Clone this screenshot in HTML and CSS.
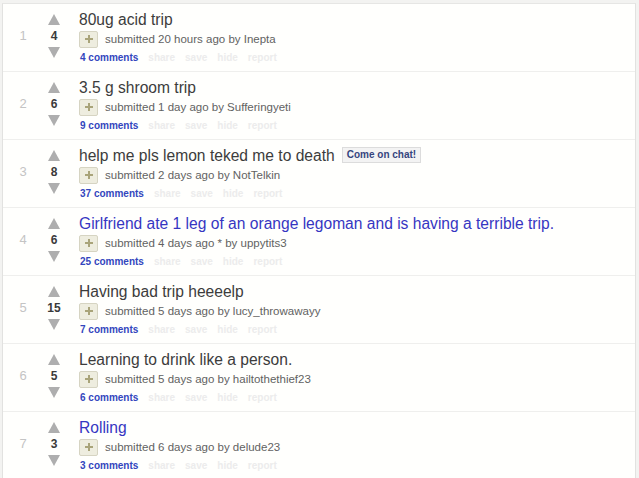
FILE: index.html
```html
<!DOCTYPE html>
<html>
<head>
<meta charset="utf-8">
<link rel="stylesheet" href="styles.css">
</head>
<body>
<div class="frame">
  <div class="row">
    <div class="rank">1</div>
    <div class="vote">
      <svg class="arrow" viewBox="0 0 12 11"><polygon points="6,0 12,11 0,11"/></svg>
      <div class="score">4</div>
      <svg class="arrow" viewBox="0 0 12 11"><polygon points="0,0 12,0 6,11"/></svg>
    </div>
    <div class="entry">
      <div class="title-line"><a class="title">80ug acid trip</a></div>
      <div class="tagline"><span class="expando"><svg viewBox="0 0 8 8"><rect x="3" y="0" width="2" height="8"/><rect x="0" y="3" width="8" height="2"/></svg></span>submitted 20 hours ago by Inepta</div>
      <div class="buttons"><a class="comments">4 comments</a><span>share</span><span>save</span><span>hide</span><span>report</span></div>
    </div>
  </div>
  <div class="row">
    <div class="rank">2</div>
    <div class="vote">
      <svg class="arrow" viewBox="0 0 12 11"><polygon points="6,0 12,11 0,11"/></svg>
      <div class="score">6</div>
      <svg class="arrow" viewBox="0 0 12 11"><polygon points="0,0 12,0 6,11"/></svg>
    </div>
    <div class="entry">
      <div class="title-line"><a class="title">3.5 g shroom trip</a></div>
      <div class="tagline"><span class="expando"><svg viewBox="0 0 8 8"><rect x="3" y="0" width="2" height="8"/><rect x="0" y="3" width="8" height="2"/></svg></span>submitted 1 day ago by Sufferingyeti</div>
      <div class="buttons"><a class="comments">9 comments</a><span>share</span><span>save</span><span>hide</span><span>report</span></div>
    </div>
  </div>
  <div class="row">
    <div class="rank">3</div>
    <div class="vote">
      <svg class="arrow" viewBox="0 0 12 11"><polygon points="6,0 12,11 0,11"/></svg>
      <div class="score">8</div>
      <svg class="arrow" viewBox="0 0 12 11"><polygon points="0,0 12,0 6,11"/></svg>
    </div>
    <div class="entry">
      <div class="title-line"><a class="title">help me pls lemon teked me to death</a><span class="flair">Come on chat!</span></div>
      <div class="tagline"><span class="expando"><svg viewBox="0 0 8 8"><rect x="3" y="0" width="2" height="8"/><rect x="0" y="3" width="8" height="2"/></svg></span>submitted 2 days ago by NotTelkin</div>
      <div class="buttons"><a class="comments">37 comments</a><span>share</span><span>save</span><span>hide</span><span>report</span></div>
    </div>
  </div>
  <div class="row">
    <div class="rank">4</div>
    <div class="vote">
      <svg class="arrow" viewBox="0 0 12 11"><polygon points="6,0 12,11 0,11"/></svg>
      <div class="score">6</div>
      <svg class="arrow" viewBox="0 0 12 11"><polygon points="0,0 12,0 6,11"/></svg>
    </div>
    <div class="entry">
      <div class="title-line"><a class="title unvisited">Girlfriend ate 1 leg of an orange legoman and is having a terrible trip.</a></div>
      <div class="tagline"><span class="expando"><svg viewBox="0 0 8 8"><rect x="3" y="0" width="2" height="8"/><rect x="0" y="3" width="8" height="2"/></svg></span>submitted 4 days ago * by uppytits3</div>
      <div class="buttons"><a class="comments">25 comments</a><span>share</span><span>save</span><span>hide</span><span>report</span></div>
    </div>
  </div>
  <div class="row">
    <div class="rank">5</div>
    <div class="vote">
      <svg class="arrow" viewBox="0 0 12 11"><polygon points="6,0 12,11 0,11"/></svg>
      <div class="score">15</div>
      <svg class="arrow" viewBox="0 0 12 11"><polygon points="0,0 12,0 6,11"/></svg>
    </div>
    <div class="entry">
      <div class="title-line"><a class="title">Having bad trip heeeelp</a></div>
      <div class="tagline"><span class="expando"><svg viewBox="0 0 8 8"><rect x="3" y="0" width="2" height="8"/><rect x="0" y="3" width="8" height="2"/></svg></span>submitted 5 days ago by lucy_throwawayy</div>
      <div class="buttons"><a class="comments">7 comments</a><span>share</span><span>save</span><span>hide</span><span>report</span></div>
    </div>
  </div>
  <div class="row">
    <div class="rank">6</div>
    <div class="vote">
      <svg class="arrow" viewBox="0 0 12 11"><polygon points="6,0 12,11 0,11"/></svg>
      <div class="score">5</div>
      <svg class="arrow" viewBox="0 0 12 11"><polygon points="0,0 12,0 6,11"/></svg>
    </div>
    <div class="entry">
      <div class="title-line"><a class="title">Learning to drink like a person.</a></div>
      <div class="tagline"><span class="expando"><svg viewBox="0 0 8 8"><rect x="3" y="0" width="2" height="8"/><rect x="0" y="3" width="8" height="2"/></svg></span>submitted 5 days ago by hailtothethief23</div>
      <div class="buttons"><a class="comments">6 comments</a><span>share</span><span>save</span><span>hide</span><span>report</span></div>
    </div>
  </div>
  <div class="row">
    <div class="rank">7</div>
    <div class="vote">
      <svg class="arrow" viewBox="0 0 12 11"><polygon points="6,0 12,11 0,11"/></svg>
      <div class="score">3</div>
      <svg class="arrow" viewBox="0 0 12 11"><polygon points="0,0 12,0 6,11"/></svg>
    </div>
    <div class="entry">
      <div class="title-line"><a class="title unvisited">Rolling</a></div>
      <div class="tagline"><span class="expando"><svg viewBox="0 0 8 8"><rect x="3" y="0" width="2" height="8"/><rect x="0" y="3" width="8" height="2"/></svg></span>submitted 6 days ago by delude23</div>
      <div class="buttons"><a class="comments">3 comments</a><span>share</span><span>save</span><span>hide</span><span>report</span></div>
    </div>
  </div>
</div>
</body>
</html>
```
FILE: styles.css
```css
html, body {
  margin: 0;
  padding: 0;
  height: 100%;
}
body {
  background: #f3f3f1;
  font-family: "Liberation Sans", Arial, sans-serif;
  overflow: hidden;
}
.frame {
  margin: 3px 0 0 2px;
  width: 632px;
  min-height: 480px;
  background: #fffffd;
  border-left: 1px solid #e2e2e0;
  border-top: 1px solid #e6e6e4;
  border-right: 1px solid #e2e2e0;
}
.row {
  display: flex;
  height: 67px;
  border-bottom: 1px solid #efefed;
}
.rank {
  width: 40px;
  padding-top: 22px;
  line-height: 20px;
  text-align: center;
  font-size: 13px;
  color: #c4c4c4;
}
.vote {
  width: 22px;
  padding-top: 10px;
  display: flex;
  flex-direction: column;
  align-items: center;
}
.arrow {
  width: 12px;
  height: 11px;
  display: block;
  fill: #aeaeae;
}
.score {
  height: 22px;
  line-height: 22px;
  font-size: 12px;
  font-weight: bold;
  color: #3a3a3a;
  text-align: center;
}
.entry {
  margin-left: 14px;
  padding-top: 6px;
}
.title-line {
  line-height: 20px;
  height: 20px;
  white-space: nowrap;
}
.title {
  font-size: 15.6px;
  color: #3c3c3c;
}
.title.unvisited {
  color: #3636c2;
}
.flair {
  display: inline-block;
  margin-left: 7px;
  padding: 0 4px;
  height: 14px;
  line-height: 14px;
  vertical-align: 3px;
  font-size: 10px;
  font-weight: bold;
  color: #36457e;
  background: #f3f3f3;
  border: 1px solid #dcdcdc;
}
.tagline {
  display: flex;
  align-items: center;
  height: 18px;
  font-size: 11.5px;
  color: #626262;
  white-space: nowrap;
}
.expando {
  width: 17px;
  height: 15px;
  margin-right: 7px;
  background: #eeeddf;
  border: 1px solid #d6d4c2;
  border-radius: 2px;
  display: flex;
  align-items: center;
  justify-content: center;
}
.expando svg {
  width: 8px;
  height: 8px;
  fill: #a9a47a;
}
.buttons {
  margin-top: 3px;
  height: 14px;
  line-height: 14px;
  font-size: 10px;
  font-weight: bold;
  color: #ececec;
  display: flex;
  gap: 10px;
  padding-left: 1px;
}
.comments {
  color: #3346bd;
}
```
